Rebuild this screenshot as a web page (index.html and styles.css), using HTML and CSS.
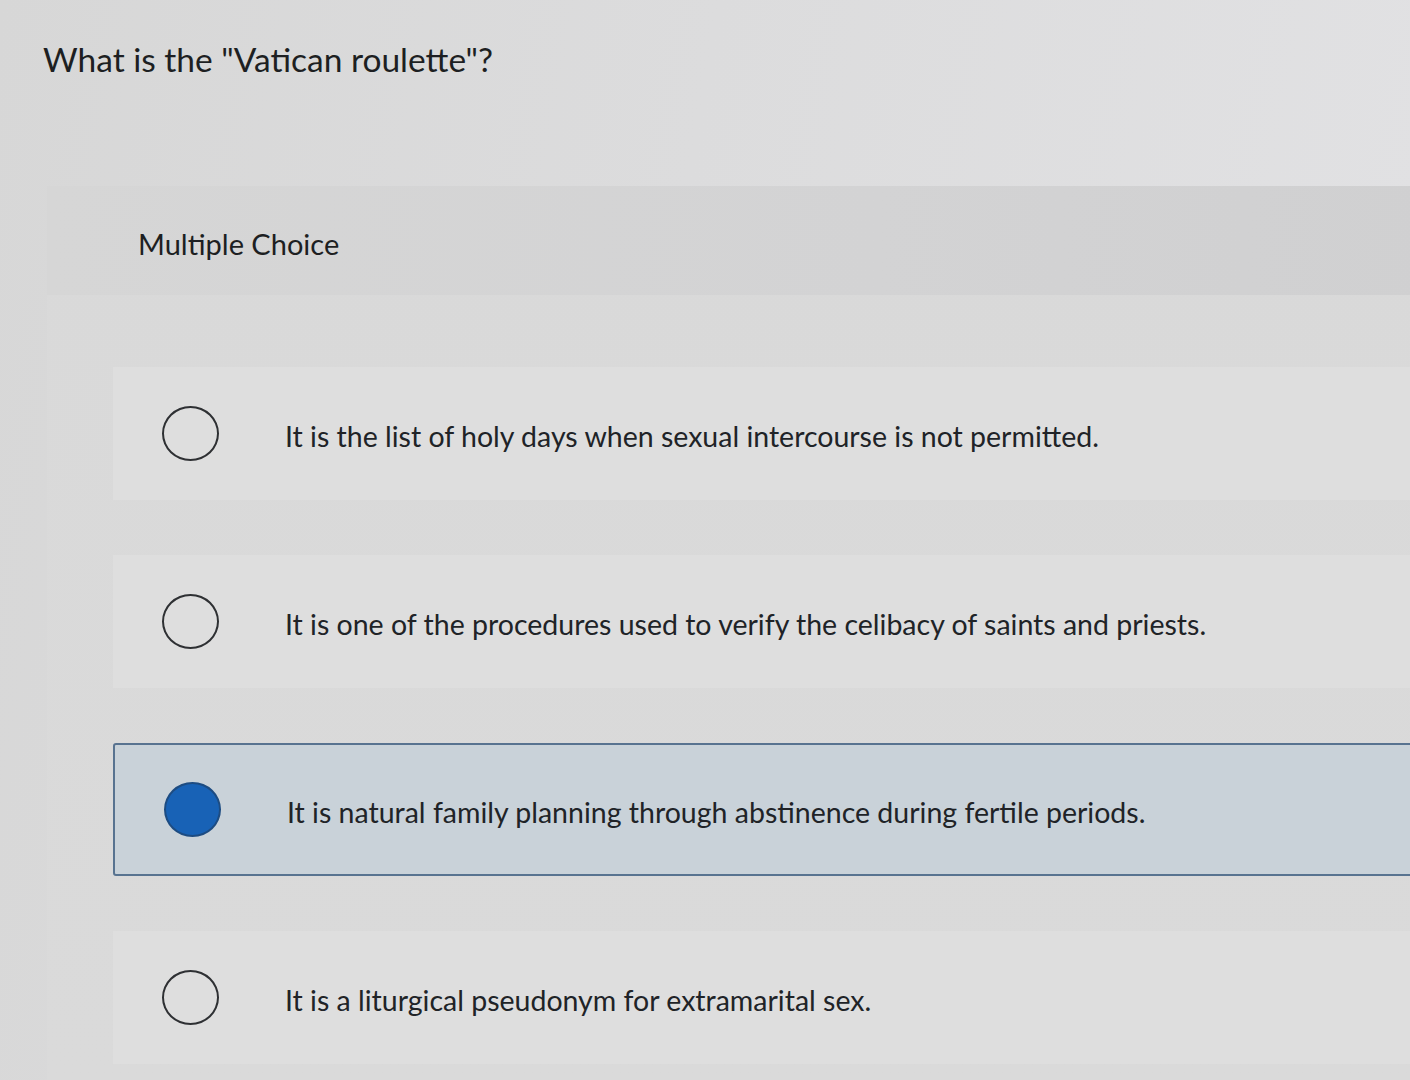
FILE: index.html
```html
<!DOCTYPE html>
<html lang="en">
<head>
<meta charset="utf-8">
<title>What is the "Vatican roulette"?</title>
<link rel="stylesheet" href="styles.css">
</head>
<body>
<main class="page">
  <h1 class="question">What is the "Vatican roulette"?</h1>
  <section class="card">
    <div class="card-head">Multiple Choice</div>
    <div class="options">
      <div class="option">
        <span class="radio"></span>
        <span class="option-text">It is the list of holy days when sexual intercourse is not permitted.</span>
      </div>
      <div class="option">
        <span class="radio"></span>
        <span class="option-text">It is one of the procedures used to verify the celibacy of saints and priests.</span>
      </div>
      <div class="option selected">
        <span class="radio"></span>
        <span class="option-text">It is natural family planning through abstinence during fertile periods.</span>
      </div>
      <div class="option">
        <span class="radio"></span>
        <span class="option-text">It is a liturgical pseudonym for extramarital sex.</span>
      </div>
    </div>
  </section>
</main>
</body>
</html>
```

FILE: styles.css
```css
html, body {
  margin: 0;
  padding: 0;
  height: 100%;
  overflow: hidden;
}

body {
  background: linear-gradient(100deg, #d7d7d7 0%, #dcdcdd 45%, #e2e2e4 100%);
  font-family: "Lato", "Open Sans", "Liberation Sans", sans-serif;
  color: #1f2226;
}

.page {
  display: flex;
  flex-direction: column;
}

.question {
  margin: 0;
  padding: 40px 0 0 43px;
  font-size: 33.5px;
  line-height: 38px;
  font-weight: 400;
  color: #1d1f22;
}

.card {
  margin: 108px -20px 0 47px;
  background: linear-gradient(180deg, #d9d9d9 0%, #dadada 100%);
  display: flex;
  flex-direction: column;
  min-height: 900px;
}

.card-head {
  background: linear-gradient(90deg, #d6d6d6 0%, #d3d3d4 60%, #d0d0d1 100%);
  height: 109px;
  box-sizing: border-box;
  padding: 41px 0 0 91px;
  font-size: 29px;
  line-height: 34px;
  color: #1d1f22;
}

.options {
  display: flex;
  flex-direction: column;
  gap: 55px;
  padding: 72px 0 0 66px;
}

.option {
  height: 133px;
  box-sizing: border-box;
  display: flex;
  align-items: center;
  gap: 66px;
  padding-left: 49px;
  background: #dedede;
}

.option-text {
  font-size: 28.5px;
  line-height: 34px;
  color: #202327;
  padding-top: 4px;
}

.radio {
  width: 57px;
  height: 55px;
  flex: none;
  box-sizing: border-box;
  border: 2px solid #2e3033;
  border-radius: 50%;
}

.option.selected {
  background: #c9d2d9;
  border: 2px solid #587390;
  border-radius: 3px;
}

.option.selected .radio {
  background: #1862b6;
  border-color: #1d4c82;
}
```
